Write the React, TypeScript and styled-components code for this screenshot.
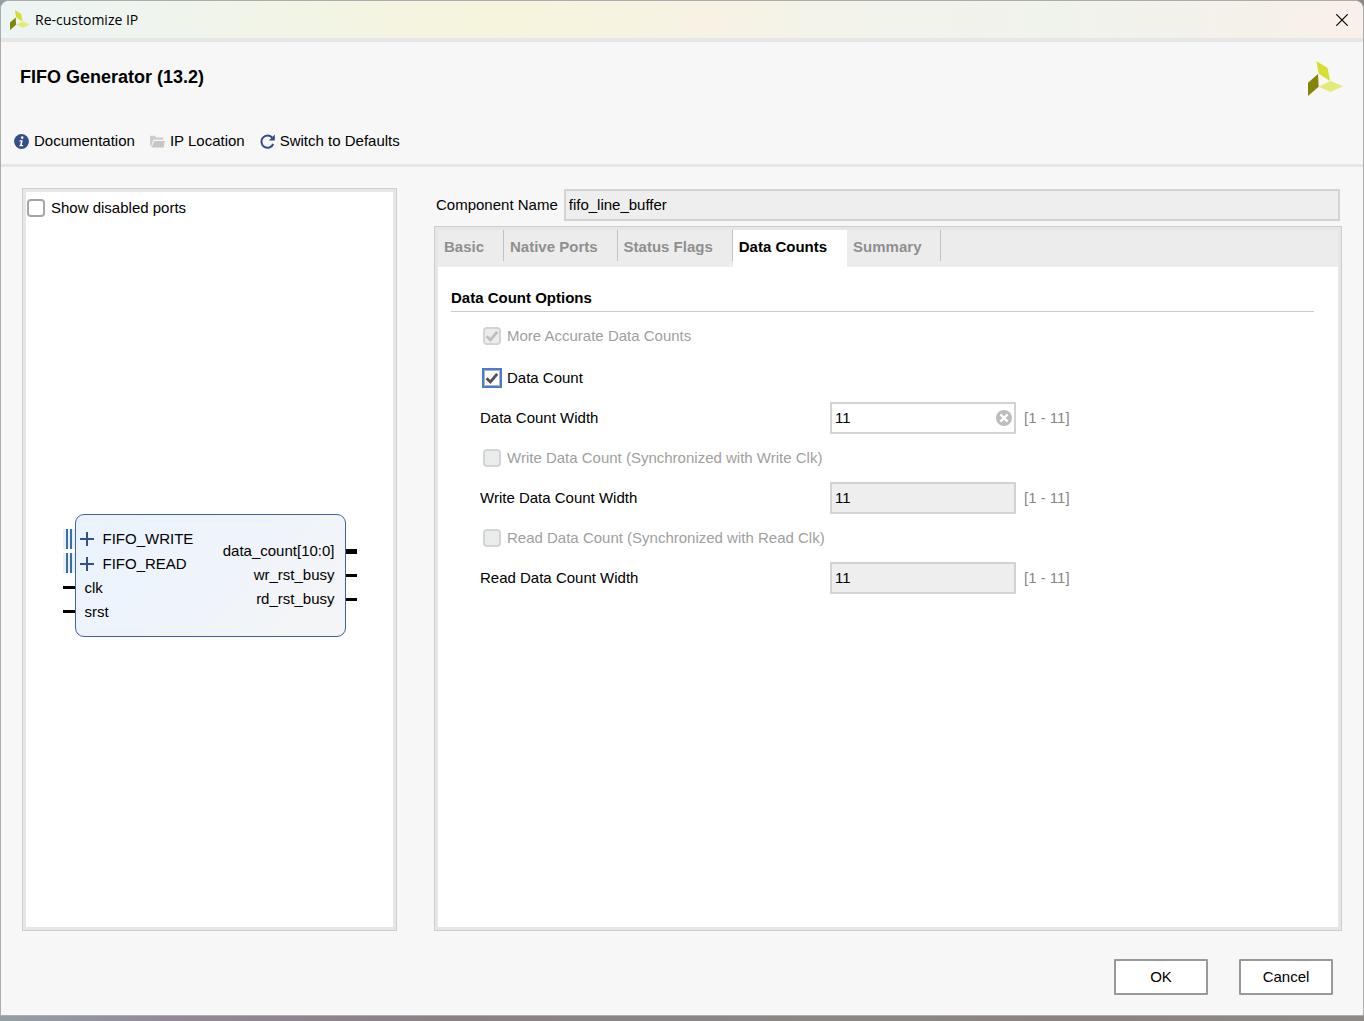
import React, { useState } from "react";
import styled, { createGlobalStyle, css } from "styled-components";

const GlobalStyle = createGlobalStyle`
  *, *::before, *::after { box-sizing: border-box; }
  body {
    margin: 0;
    font-family: "Liberation Sans", Arial, sans-serif;
    font-size: 15px;
    line-height: 20px;
    color: #000;
    background: #c4c4c4;
  }
  button, input { font: inherit; color: inherit; }
`;

const Desktop = styled.div`
  min-height: 100vh;
  display: flex;
  flex-direction: column;
  padding-bottom: 5px;
  background: linear-gradient(90deg, #93a0a8, #94899a 12%, #91838f 22%, #8a8184 34%, #8c8886 60%, #8b8282 80%, #8e8b87);
`;

const Dialog = styled.div`
  flex: 1;
  display: flex;
  flex-direction: column;
  background: #f7f7f7;
  border: 1px solid #acacac;
  border-radius: 9px 9px 0 0;
  overflow: hidden;
`;

const TitleBar = styled.header`
  display: flex;
  align-items: center;
  gap: 5px;
  height: 41px;
  padding: 0 15px 0 9px;
  border-bottom: 4px solid #e6e6e6;
  background: linear-gradient(90deg, #ecf5f5, #f6f4dc 36%, #f7f2e4 52%, #f3f3ea 61%, #f0f3ec 78%, #f5f1e9 93%, #faf0ea);
  font-family: "Open Sans", "Noto Sans", sans-serif;
  font-size: 14px;
`;

const TitleText = styled.span`
  flex: 1;
`;

const CloseButton = styled.button`
  display: flex;
  padding: 0;
  border: 0;
  background: none;
`;

const Header = styled.section`
  padding: 19px 20px 13px 13px;
  border-bottom: 3px solid #e6e6e6;
`;

const HeaderTop = styled.div`
  display: flex;
  justify-content: space-between;
  align-items: flex-start;
  padding-left: 6px;
`;

const ProductName = styled.h1`
  margin: 0;
  font-size: 18px;
  line-height: 32px;
`;

const Toolbar = styled.nav`
  display: flex;
  gap: 15px;
  margin-top: 35px;
`;

const ToolButton = styled.button`
  display: flex;
  align-items: center;
  gap: 5px;
  padding: 0;
  border: 0;
  background: none;
`;

const Body = styled.main`
  flex: 1;
  display: flex;
  gap: 37px;
  padding: 21px 21px 0;
`;

const panelFrame = css`
  border: 1px solid #cecece;
  outline: 3px solid #e6e6e6;
  outline-offset: -4px;
  padding: 3px;
  background: #fff;
`;

const PreviewPanel = styled.section`
  ${panelFrame}
  width: 375px;
  flex: none;
  display: flex;
  flex-direction: column;
`;

const PreviewCanvas = styled.div`
  flex: 1;
  display: flex;
  align-items: center;
  justify-content: center;
`;

const CheckLabel = styled.label<{ $muted?: boolean }>`
  display: flex;
  align-items: center;
  gap: 5px;
  color: ${(p) => (p.$muted ? "#a0a0a0" : "#000")};
`;

const PreviewOption = styled.div`
  padding: 6px 0 6px 0;
`;

const CheckMarkHolder = styled.span`
  display: grid;
  place-items: center;
  width: 20px;
  height: 20px;

  > * { grid-area: 1 / 1; }
  > svg { pointer-events: none; }
`;

const CheckInput = styled.input<{ $highlighted?: boolean }>`
  appearance: none;
  margin: 0;
  width: 18px;
  height: 18px;
  border: 2px solid #a6a6a6;
  border-radius: 4px;
  background: #fff;

  &:disabled {
    border-color: #d4d4d4;
    background: #ebecee;
  }

  ${(p) =>
    p.$highlighted &&
    css`
      width: 20px;
      height: 20px;
      border: 2px solid #4d7acb;
      border-radius: 0;
      box-shadow: inset 0 0 0 1px #a9b4c6;
    `}
`;

const SymbolFrame = styled.div`
  display: flex;
`;

const PinColumn = styled.div<{ $side: "left" | "right" }>`
  display: flex;
  flex-direction: column;
  width: ${(p) => (p.$side === "left" ? 12 : 11)}px;
  padding-top: ${(p) => (p.$side === "left" ? 13 : 25)}px;
`;

const PinSlot = styled.div`
  display: flex;
  align-items: center;
  height: 24px;
`;

const Pin = styled.span<{ $bus?: boolean }>`
  width: 100%;
  height: ${(p) => (p.$bus ? 5 : 3)}px;
  background: #000;
`;

const InterfacePin = styled.span`
  width: 100%;
  height: 20px;
  padding: 0 3px;
  background: linear-gradient(90deg, #3b6ea5 2px, #e8f1f9 2px, #e8f1f9 4px, #3b6ea5 4px) content-box, #e8f1f9;
`;

const SymbolBody = styled.div`
  display: flex;
  justify-content: space-between;
  width: 271px;
  height: 123px;
  padding: 0 10px 0 4px;
  border: 1px solid #3f63a8;
  border-radius: 9px;
  background: linear-gradient(135deg, #e9f3fe, #eff4fb 50%, #f5f5f5);
`;

const PortColumn = styled.ul<{ $side: "left" | "right" }>`
  list-style: none;
  margin: 0;
  padding: ${(p) => (p.$side === "left" ? "11px 0 0" : "24px 0 0")};
  text-align: ${(p) => p.$side};
`;

const Port = styled.li<{ $plain?: boolean }>`
  display: flex;
  justify-content: inherit;
  align-items: center;
  gap: 9px;
  height: ${(p) => (p.$plain ? 24 : 25)}px;
  padding-left: ${(p) => (p.$plain ? 5 : 0)}px;
`;

const OutputPort = styled(Port)`
  justify-content: flex-end;
`;

const ExpandButton = styled.button`
  display: flex;
  padding: 0;
  border: 0;
  background: none;
`;

const ConfigColumn = styled.section`
  flex: 1;
  min-width: 0;
  display: flex;
  flex-direction: column;
  gap: 5px;
`;

const NameRow = styled.div`
  display: flex;
  align-items: center;
  gap: 6px;
  padding: 1px 2px 0;
`;

const TextBox = styled.input`
  width: 100%;
  min-width: 0;
  height: 32px;
  padding: 0 2px 1px 3px;
  border: 2px solid #d2d2d2;
  border-radius: 1px;
  background: #fff;

  &:read-only, &:disabled {
    background: #eee;
    color: #000;
  }
`;

const ConfigPanel = styled.div`
  ${panelFrame}
  flex: 1;
`;

const TabList = styled.div`
  display: flex;
  background: #ececec;
`;

const Tab = styled.button<{ $active?: boolean }>`
  height: 37px;
  padding: 0 20px 3px 6px;
  border: 0;
  font-weight: bold;
  color: ${(p) => (p.$active ? "#000" : "#8f8f8f")};
  background: ${(p) =>
    p.$active ? "#fff" : "linear-gradient(#c2c2c2, #c2c2c2) right top / 1px 31px no-repeat"};
`;

const TabPage = styled.div`
  padding: 21px 24px 21px 13px;
`;

const GroupTitle = styled.h2`
  margin: 0;
  padding-bottom: 3px;
  border-bottom: 1px solid #cbcbcb;
  font-size: 15px;
  line-height: 20px;
`;

const OptionList = styled.div`
  display: flex;
  flex-direction: column;
  padding: 4px 0 0 29px;
`;

const CheckRow = styled.div<{ $spaced?: boolean }>`
  display: flex;
  align-items: center;
  height: 40px;
  padding-left: 2px;
  margin-bottom: ${(p) => (p.$spaced ? 2 : 0)}px;
`;

const FieldRow = styled.div`
  display: grid;
  grid-template-columns: 350px 186px auto;
  align-items: center;
  height: 40px;
`;

const FieldBox = styled.div`
  position: relative;
  display: flex;
`;

const ClearButton = styled.button`
  position: absolute;
  top: 8px;
  right: 4px;
  display: flex;
  padding: 0;
  border: 0;
  background: none;
`;

const RangeHint = styled.span`
  padding-left: 8px;
  color: #868686;
`;

const Footer = styled.footer`
  display: flex;
  justify-content: flex-end;
  gap: 31px;
  padding: 28px 30px 20px;
`;

const DialogButton = styled.button`
  width: 94px;
  height: 36px;
  padding: 0;
  border: 2px solid #999;
  border-radius: 1px;
  background: #fff;
`;

const Logo = ({ size }: { size: number }) => (
  <svg width={size} height={size} viewBox="432 183 105 105" aria-hidden="true">
    <polygon points="457,183 491,204 498,243 464,221" fill="#d5de32" />
    <polygon points="432,248 462,222 464,260 432,288" fill="#848407" />
    <polygon points="464,260 500,243 537,259 500,276" fill="#e4ea79" />
  </svg>
);

const CloseIcon = () => (
  <svg width="12" height="12" viewBox="0 0 12 12" aria-hidden="true">
    <path d="M0.3 0.3L11.7 11.7M11.7 0.3L0.3 11.7" stroke="#000" strokeWidth="1.2" />
  </svg>
);

const InfoIcon = () => (
  <svg width="15" height="15" viewBox="0 0 15 15" aria-hidden="true">
    <circle cx="7.5" cy="7.5" r="7.4" fill="#344f87" />
    <circle cx="8.2" cy="3.6" r="1.3" fill="#fff" />
    <path d="M5.5 6.2h3.3l-1 4.8h1.4l-.3 1.2H5.3l.3-1.2h.5l.8-3.6H5.3z" fill="#fff" />
  </svg>
);

const FolderIcon = () => (
  <svg width="15" height="15" viewBox="0 0 15 15" aria-hidden="true">
    <path d="M0 1.8h5l1.4 1.6h6.8v2.4H3.6L1.4 11.5 0 12.6z" fill="#cdcdcd" />
    <path d="M4.4 7h10.4l-1.2 6.5H1.4z" fill="#c6c6c6" />
  </svg>
);

const RefreshIcon = () => (
  <svg width="15" height="15" viewBox="0 0 15 15" aria-hidden="true">
    <path d="M12.2 3.7A6.1 6.1 0 1 0 13.2 10" fill="none" stroke="#344f87" strokeWidth="2" />
    <path d="M14.8 0.6v6H8.8z" fill="#344f87" />
  </svg>
);

const PlusIcon = () => (
  <svg width="14" height="14" viewBox="0 0 14 14" aria-hidden="true">
    <path d="M7 0v14M0 7h14" stroke="#34508c" strokeWidth="2" />
  </svg>
);

const ClearIcon = () => (
  <svg width="16" height="16" viewBox="0 0 16 16" aria-hidden="true">
    <circle cx="8" cy="8" r="8" fill="#bdbdbd" />
    <path d="M4.4 4.4l7.2 7.2M11.6 4.4l-7.2 7.2" stroke="#fff" strokeWidth="2.2" />
  </svg>
);

const CheckMark = ({ color }: { color: string }) => (
  <svg width="14" height="14" viewBox="0 0 14 14" aria-hidden="true">
    <path d="M1.6 7.2L5.4 11L12.2 2.8" fill="none" stroke={color} strokeWidth="2.8" />
  </svg>
);

type CheckBoxProps = {
  label: string;
  initial?: boolean;
  disabled?: boolean;
  highlighted?: boolean;
};

const CheckBox = ({ label, initial = false, disabled, highlighted }: CheckBoxProps) => {
  const [checked, setChecked] = useState(initial);
  return (
    <CheckLabel $muted={disabled}>
      <CheckMarkHolder>
        <CheckInput
          type="checkbox"
          checked={checked}
          disabled={disabled}
          $highlighted={highlighted}
          onChange={(e) => setChecked(e.target.checked)}
        />
        {checked && <CheckMark color={disabled ? "#bdbdbd" : "#505050"} />}
      </CheckMarkHolder>
      {label}
    </CheckLabel>
  );
};

type WidthFieldProps = { id: string; label: string; editable?: boolean };

const WidthField = ({ id, label, editable }: WidthFieldProps) => {
  const [value, setValue] = useState("11");
  return (
    <FieldRow>
      <label htmlFor={id}>{label}</label>
      <FieldBox>
        <TextBox id={id} value={value} disabled={!editable} onChange={(e) => setValue(e.target.value)} />
        {editable && (
          <ClearButton type="button" aria-label="Clear" onClick={() => setValue("")}>
            <ClearIcon />
          </ClearButton>
        )}
      </FieldBox>
      <RangeHint>[1 - 11]</RangeHint>
    </FieldRow>
  );
};

const BlockSymbol = () => (
  <SymbolFrame>
    <PinColumn $side="left">
      <PinSlot><InterfacePin /></PinSlot>
      <PinSlot><InterfacePin /></PinSlot>
      <PinSlot><Pin /></PinSlot>
      <PinSlot><Pin /></PinSlot>
    </PinColumn>
    <SymbolBody>
      <PortColumn $side="left">
        {["FIFO_WRITE", "FIFO_READ"].map((name) => (
          <Port key={name}>
            <ExpandButton type="button" aria-label={`Expand ${name}`}><PlusIcon /></ExpandButton>
            {name}
          </Port>
        ))}
        <Port $plain>clk</Port>
        <Port $plain>srst</Port>
      </PortColumn>
      <PortColumn $side="right">
        {["data_count[10:0]", "wr_rst_busy", "rd_rst_busy"].map((name) => (
          <OutputPort $plain key={name}>{name}</OutputPort>
        ))}
      </PortColumn>
    </SymbolBody>
    <PinColumn $side="right">
      <PinSlot><Pin $bus /></PinSlot>
      <PinSlot><Pin /></PinSlot>
      <PinSlot><Pin /></PinSlot>
    </PinColumn>
  </SymbolFrame>
);

const TABS = ["Basic", "Native Ports", "Status Flags", "Data Counts", "Summary"];

export default function App() {
  return (
    <>
      <GlobalStyle />
      <Desktop>
        <Dialog role="dialog" aria-label="Re-customize IP">
          <TitleBar>
            <Logo size={20} />
            <TitleText>Re-customize IP</TitleText>
            <CloseButton type="button" aria-label="Close"><CloseIcon /></CloseButton>
          </TitleBar>
          <Header>
            <HeaderTop>
              <ProductName>FIFO Generator (13.2)</ProductName>
              <Logo size={35} />
            </HeaderTop>
            <Toolbar>
              <ToolButton type="button"><InfoIcon />Documentation</ToolButton>
              <ToolButton type="button"><FolderIcon />IP Location</ToolButton>
              <ToolButton type="button"><RefreshIcon />Switch to Defaults</ToolButton>
            </Toolbar>
          </Header>
          <Body>
            <PreviewPanel>
              <PreviewOption>
                <CheckBox label="Show disabled ports" />
              </PreviewOption>
              <PreviewCanvas>
                <BlockSymbol />
              </PreviewCanvas>
            </PreviewPanel>
            <ConfigColumn>
              <NameRow>
                <label htmlFor="component-name" style={undefined}>Component&nbsp;Name</label>
                <TextBox id="component-name" value="fifo_line_buffer" readOnly />
              </NameRow>
              <ConfigPanel>
                <TabList role="tablist">
                  {TABS.map((name) => (
                    <Tab
                      key={name}
                      type="button"
                      role="tab"
                      aria-selected={name === "Data Counts"}
                      $active={name === "Data Counts"}
                    >
                      {name}
                    </Tab>
                  ))}
                </TabList>
                <TabPage role="tabpanel">
                  <GroupTitle>Data Count Options</GroupTitle>
                  <OptionList>
                    <CheckRow $spaced>
                      <CheckBox label="More Accurate Data Counts" initial disabled />
                    </CheckRow>
                    <CheckRow>
                      <CheckBox label="Data Count" initial highlighted />
                    </CheckRow>
                    <WidthField id="data-width" label="Data Count Width" editable />
                    <CheckRow>
                      <CheckBox label="Write Data Count (Synchronized with Write Clk)" disabled />
                    </CheckRow>
                    <WidthField id="write-width" label="Write Data Count Width" />
                    <CheckRow>
                      <CheckBox label="Read Data Count (Synchronized with Read Clk)" disabled />
                    </CheckRow>
                    <WidthField id="read-width" label="Read Data Count Width" />
                  </OptionList>
                </TabPage>
              </ConfigPanel>
            </ConfigColumn>
          </Body>
          <Footer>
            <DialogButton type="button">OK</DialogButton>
            <DialogButton type="button">Cancel</DialogButton>
          </Footer>
        </Dialog>
      </Desktop>
    </>
  );
}
